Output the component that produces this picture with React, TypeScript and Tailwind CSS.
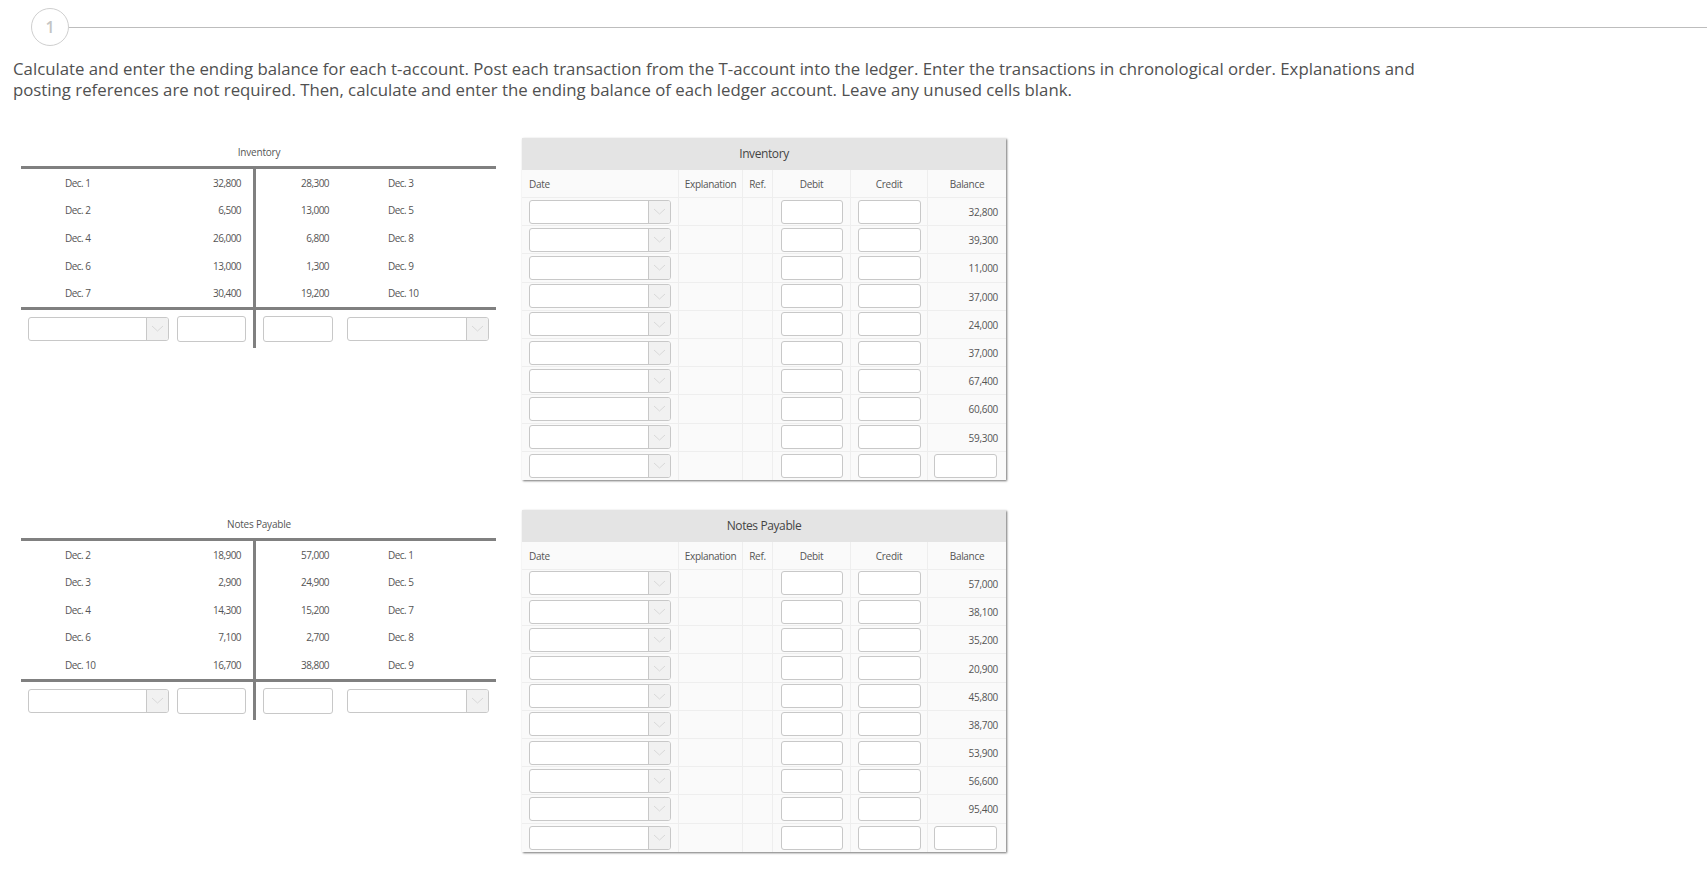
import React from "react";

function Select({ w }: { w: string }) {
  return (
    <div className={`${w} h-[24px] flex border border-[#c8c8c8] rounded-[3px] bg-white overflow-hidden shrink-0`}>
      <div className="flex-1" />
      <div className="w-[22px] bg-[#f1f1f1] border-l border-[#c8c8c8] flex items-center justify-center">
        <svg width="13" height="7" viewBox="0 0 13 7" fill="none">
          <path d="M1 1l5.5 5 5.5-5" stroke="#d8d8d8" strokeWidth="1" />
        </svg>
      </div>
    </div>
  );
}

function Input({ w, h }: { w: string; h: string }) {
  return <div className={`${w} ${h} border border-[#c8c8c8] rounded-[3px] bg-white shrink-0`} />;
}

type TRow = [string, string, string, string];

function TAccount({ title, rows }: { title: string; rows: TRow[] }) {
  return (
    <div className="w-[475px] shrink-0 text-[10px] tracking-[-0.55px] text-[#555]">
      <div className="h-[28px] pt-[6px] text-center leading-[16px] pl-[1px] tracking-[-0.2px]">{title}</div>
      <div className="h-[3px] bg-[#808080]" />
      <div className="flex">
        <div className="w-[232px]">
          {rows.map((r) => (
            <div key={r[0]} className="h-[27.6px] flex items-center pl-[44px] pr-[12px] justify-between leading-none">
              <span>{r[0]}</span>
              <span>{r[1]}</span>
            </div>
          ))}
        </div>
        <div className="w-[3px] bg-[#808080]" />
        <div className="flex-1">
          {rows.map((r) => (
            <div key={r[0] + r[3]} className="h-[27.6px] flex items-center leading-none">
              <span className="w-[73px] text-right">{r[2]}</span>
              <span className="ml-[59px]">{r[3]}</span>
            </div>
          ))}
        </div>
      </div>
      <div className="h-[3px] bg-[#808080]" />
      <div className="flex h-[38px]">
        <div className="w-[232px] flex items-start pl-[7px] pt-[7px]">
          <Select w="w-[141px]" />
          <div className="ml-[8px] -mt-[1px]"><Input w="w-[69px]" h="h-[26px]" /></div>
        </div>
        <div className="w-[3px] bg-[#808080]" />
        <div className="flex-1 flex items-start pl-[7px] pt-[7px]">
          <div className="-mt-[1px]"><Input w="w-[70px]" h="h-[26px]" /></div>
          <div className="ml-[14px]"><Select w="w-[142px]" /></div>
        </div>
      </div>
    </div>
  );
}

const cell = "border-r border-[#eeeeee] flex items-center shrink-0";

function Ledger({ title, balances }: { title: string; balances: string[] }) {
  const rows = [...balances, ""];
  return (
    <div className="w-[484px] shrink-0 bg-[#fafafa] shadow-[1px_1px_2px_rgba(0,0,0,0.55)] text-[10px] tracking-[-0.3px] text-[#555]">
      <div className="h-[32px] bg-[#e4e4e4] flex items-center justify-center text-[12px] tracking-[-0.4px] text-[#444]">
        {title}
      </div>
      <div className="h-[28px] flex border-b border-[#eeeeee]">
        <div className={`${cell} w-[157px] pl-[7px] pt-[2px]`}>Date</div>
        <div className={`${cell} w-[64px] justify-center pt-[2px]`}>Explanation</div>
        <div className={`${cell} w-[30px] justify-center pt-[2px]`}>Ref.</div>
        <div className={`${cell} w-[78px] justify-center pt-[2px]`}>Debit</div>
        <div className={`${cell} w-[77px] justify-center pt-[2px]`}>Credit</div>
        <div className="flex-1 flex items-center justify-center pt-[2px]">Balance</div>
      </div>
      {rows.map((b, i) => (
        <div key={i} className={`h-[28.2px] flex ${i < rows.length - 1 ? "border-b border-[#eeeeee]" : ""}`}>
          <div className={`${cell} w-[157px] pl-[7px]`}><Select w="w-[142px]" /></div>
          <div className={`${cell} w-[64px]`} />
          <div className={`${cell} w-[30px]`} />
          <div className={`${cell} w-[78px] pl-[8px]`}><Input w="w-[62px]" h="h-[24px]" /></div>
          <div className={`${cell} w-[77px] pl-[7px]`}><Input w="w-[63px]" h="h-[24px]" /></div>
          {b ? (
            <div className="flex-1 flex items-center justify-end pr-[8px]">
              <span className="pt-[2px]">{b}</span>
            </div>
          ) : (
            <div className="flex-1 flex items-center justify-end pr-[9px]">
              <Input w="w-[63px]" h="h-[24px]" />
            </div>
          )}
        </div>
      ))}
    </div>
  );
}

const inv: TRow[] = [
  ["Dec. 1", "32,800", "28,300", "Dec. 3"],
  ["Dec. 2", "6,500", "13,000", "Dec. 5"],
  ["Dec. 4", "26,000", "6,800", "Dec. 8"],
  ["Dec. 6", "13,000", "1,300", "Dec. 9"],
  ["Dec. 7", "30,400", "19,200", "Dec. 10"],
];
const notes: TRow[] = [
  ["Dec. 2", "18,900", "57,000", "Dec. 1"],
  ["Dec. 3", "2,900", "24,900", "Dec. 5"],
  ["Dec. 4", "14,300", "15,200", "Dec. 7"],
  ["Dec. 6", "7,100", "2,700", "Dec. 8"],
  ["Dec. 10", "16,700", "38,800", "Dec. 9"],
];

export default function App() {
  return (
    <div className="w-[1707px] h-[870px] overflow-hidden bg-white font-['Open_Sans',sans-serif] text-[#4a4a4a]">
      <div className="flex items-center pl-[31px] pt-[8px]">
        <div className="w-[38px] h-[38px] rounded-full border border-[#cfcfcf] flex items-center justify-center text-[16px] font-semibold text-[#c4c4c4] shrink-0">
          1
        </div>
        <div className="flex-1 h-px bg-[#bdbdbd]" />
      </div>
      <p className="mt-[12px] ml-[13px] w-[1440px] text-[16.8px] leading-[21px] text-[#505050]">
        Calculate and enter the ending balance for each t-account. Post each transaction from the T-account into the ledger. Enter the transactions in chronological order. Explanations and posting references are not required. Then, calculate and enter the ending balance of each ledger account. Leave any unused cells blank.
      </p>
      <div className="mt-[38px] ml-[21px] flex flex-col gap-[30px]">
        <div className="flex gap-[26px]">
          <TAccount title="Inventory" rows={inv} />
          <Ledger title="Inventory" balances={["32,800", "39,300", "11,000", "37,000", "24,000", "37,000", "67,400", "60,600", "59,300"]} />
        </div>
        <div className="flex gap-[26px]">
          <TAccount title="Notes Payable" rows={notes} />
          <Ledger title="Notes Payable" balances={["57,000", "38,100", "35,200", "20,900", "45,800", "38,700", "53,900", "56,600", "95,400"]} />
        </div>
      </div>
    </div>
  );
}
